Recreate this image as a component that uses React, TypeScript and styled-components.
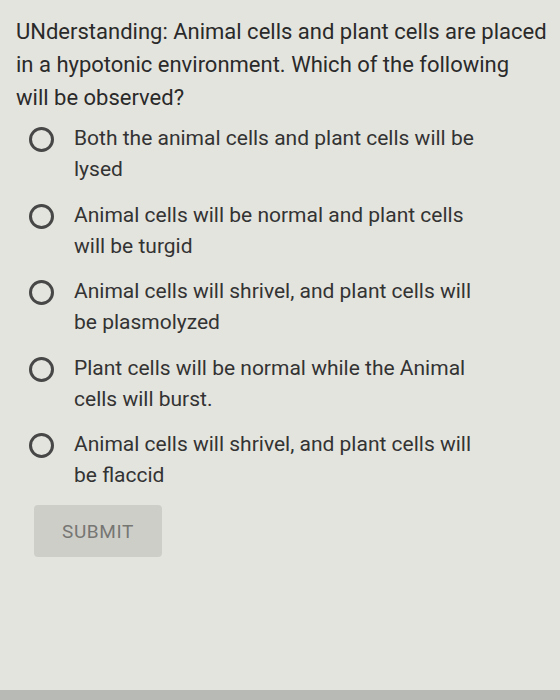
import React from "react";
import styled, { createGlobalStyle } from "styled-components";

const Global = createGlobalStyle`
  html, body { margin: 0; padding: 0; background: #e4e4de; }
  * { box-sizing: border-box; }
`;

const Page = styled.div`
  min-height: 700px;
  display: flex;
  flex-direction: column;
  background: #e4e4de;
  font-family: Roboto, "Liberation Sans", sans-serif;
`;

const Content = styled.div`
  flex: 1;
  padding: 15px 0 0 16px;
`;

const Question = styled.p`
  margin: 0;
  font-size: 22px;
  line-height: 33px;
  color: #2a2a2a;
  white-space: nowrap;
`;

const Options = styled.div`
  display: flex;
  flex-direction: column;
  gap: 14.5px;
  margin-top: 9px;
  padding-left: 13px;
`;

const Option = styled.label`
  display: flex;
  align-items: flex-start;
  gap: 20px;
  cursor: pointer;
`;

const Radio = styled.span`
  flex: none;
  width: 25px;
  height: 25px;
  margin-top: 4px;
  border: 3px solid #474747;
  border-radius: 50%;
`;

const OptionText = styled.span`
  font-size: 21px;
  line-height: 31px;
  color: #333333;
  white-space: nowrap;
`;

const Submit = styled.button`
  margin: 14px 0 0 18px;
  width: 128px;
  height: 52px;
  border: none;
  border-radius: 4px;
  background: #cecec9;
  color: #767673;
  font-family: Roboto, "Liberation Sans", sans-serif;
  font-size: 19px;
  letter-spacing: 0.6px;
  text-transform: uppercase;
`;

const Edge = styled.div`
  height: 10px;
  background: #b8bab6;
`;

const options: string[][] = [
  ["Both the animal cells and plant cells will be", "lysed"],
  ["Animal cells will be normal and plant cells", "will be turgid"],
  ["Animal cells will shrivel, and plant cells will", "be plasmolyzed"],
  ["Plant cells will be normal while the Animal", "cells will burst."],
  ["Animal cells will shrivel, and plant cells will", "be flaccid"],
];

export default function App() {
  return (
    <Page>
      <Global />
      <Content>
        <Question>
          UNderstanding: Animal cells and plant cells are placed
          <br />
          in a hypotonic environment. Which of the following
          <br />
          will be observed?
        </Question>
        <Options>
          {options.map((o, i) => (
            <Option key={i}>
              <Radio />
              <OptionText>
                {o[0]}
                <br />
                {o[1]}
              </OptionText>
            </Option>
          ))}
        </Options>
        <Submit>Submit</Submit>
      </Content>
      <Edge />
    </Page>
  );
}
